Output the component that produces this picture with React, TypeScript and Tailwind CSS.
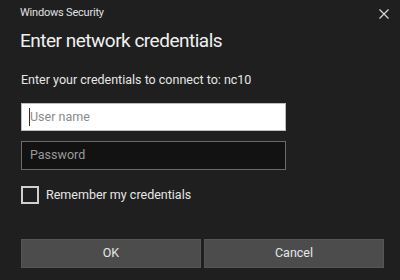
export default function App() {
  return (
    <div
      className="w-[400px] h-[280px] bg-[#1f1f1f] text-[#e6e6e6] relative overflow-hidden"
      style={{ fontFamily: '"Segoe UI", Roboto, sans-serif' }}
    >
      {/* Title bar */}
      <div className="flex items-center justify-between h-[27px] pl-[20px] pr-[10px]">
        <span className="text-[11px] tracking-[-0.2px] text-[#e0e0e0]">Windows Security</span>
        <svg width="10" height="10" viewBox="0 0 10 10" className="mr-[1px]">
          <path d="M0.5 0.5 L9.5 9.5 M9.5 0.5 L0.5 9.5" stroke="#d8d8d8" strokeWidth="1.2" />
        </svg>
      </div>

      <div className="pl-[21px] pr-[16px]">
        <h1 className="text-[19px] leading-[28px] tracking-[-0.5px] -ml-[1px] text-[#f0f0f0]">
          Enter network credentials
        </h1>

        <p className="text-[12.5px] leading-[18px] mt-[16px] text-[#e6e6e6]">
          Enter your credentials to connect to: nc10
        </p>

        <div className="mt-[14px] w-[265px] h-[28px] bg-white border border-[#bdbdbd] flex items-center pl-[7px]">
          <span className="w-px h-[18px] bg-[#333]" />
          <span className="text-[12.5px] text-[#8a8a8a]">User name</span>
        </div>

        <div className="mt-[10px] w-[265px] h-[29px] bg-[#121212] border border-[#6a6a6a] flex items-center pl-[8px]">
          <span className="text-[12.5px] text-[#9a9a9a]">Password</span>
        </div>

        <div className="mt-[16px] flex items-center gap-[7px]">
          <span className="w-[18px] h-[18px] border-2 border-[#cfcfcf]" />
          <span className="text-[12.5px] text-[#e6e6e6]">Remember my credentials</span>
        </div>

        <div className="mt-[34px] flex gap-[3px]">
          <button className="w-[180px] h-[29px] bg-[#4c4c4c] border border-[#555] text-[12.5px] text-[#e6e6e6]">
            OK
          </button>
          <button className="w-[180px] h-[29px] bg-[#4c4c4c] border border-[#555] text-[12.5px] text-[#e6e6e6]">
            Cancel
          </button>
        </div>
      </div>
    </div>
  );
}
